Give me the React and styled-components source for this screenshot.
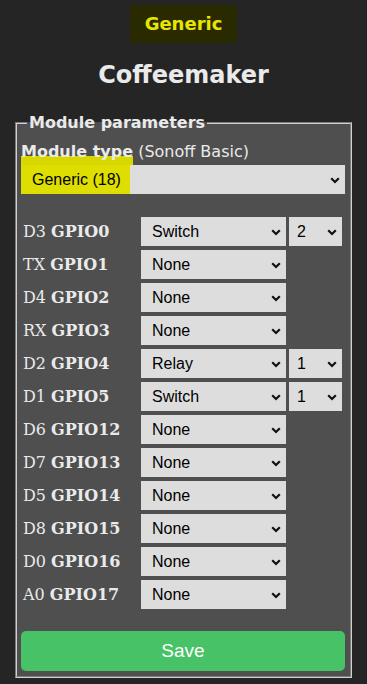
import React from 'react';
import styled, { createGlobalStyle } from 'styled-components';

const GlobalStyle = createGlobalStyle`
  html, body {
    margin: 0;
    padding: 0;
    background: #252525;
  }
  body {
    font-family: "DejaVu Sans", Verdana, sans-serif;
    color: #eaeaea;
  }
`;

const Page = styled.div`
  display: flex;
  flex-direction: column;
  align-items: center;
  padding: 5px 15px 0;
`;

const Badge = styled.div`
  background: #2a2a00;
  color: #e6e600;
  font-weight: bold;
  font-size: 18px;
  height: 38px;
  line-height: 38px;
  padding: 0 15px;
`;

const Title = styled.h2`
  margin: 17px 0 0;
  font-size: 24px;
  line-height: 30px;
  font-weight: bold;
  color: #eaeaea;
`;

const Fieldset = styled.fieldset`
  align-self: stretch;
  margin: 23px 0 0;
  padding: 10px 5px 5px 4px;
  background: #4f4f4f;
  border: 2px groove #d0d0d0;
  min-width: 0;
`;

const Legend = styled.legend`
  margin-left: 6px;
  padding: 0 2px;
  font-weight: bold;
  font-size: 16px;
  color: #eaeaea;
`;

const TypeLine = styled.div`
  font-size: 16px;
  line-height: 20px;
`;

const Marked = styled.b`
  display: inline-block;
  padding-bottom: 3px;
  margin-bottom: -3px;
  background: linear-gradient(to bottom, transparent 0 14px, #d8d800 14px);
`;

const SelectBox = styled.div`
  position: relative;
  width: ${p => p.$w || '100%'};
  height: 29px;
  margin-top: ${p => p.$mt || 0}px;
  background: ${p =>
    p.$mark
      ? 'linear-gradient(to right, #dede00 0 109px, #dddddd 109px)'
      : '#dddddd'};
`;

const NativeSelect = styled.select`
  appearance: none;
  -webkit-appearance: none;
  display: block;
  width: 100%;
  height: 100%;
  margin: 0;
  border: 0;
  outline: none;
  background: transparent;
  color: #000;
  font-family: "Liberation Sans", Arial, sans-serif;
  font-size: 16px;
  padding: 0 20px 0 ${p => p.$pl || 11}px;
`;

const Chevron = styled.svg`
  position: absolute;
  right: 5px;
  top: 50%;
  margin-top: -3px;
  pointer-events: none;
`;

const Pins = styled.div`
  display: flex;
  flex-direction: column;
  gap: 4px;
  margin-top: 23px;
`;

const Row = styled.div`
  display: grid;
  grid-template-columns: 117px 145px 53px;
  column-gap: 3px;
  align-items: center;
`;

const PinLabel = styled.div`
  padding-left: 2px;
  font-family: "DejaVu Serif", Georgia, serif;
  font-size: 16px;
  color: #eaeaea;
  white-space: nowrap;
`;

const SaveButton = styled.button`
  display: block;
  width: 100%;
  height: 40px;
  margin-top: 22px;
  border: 0;
  border-radius: 5px;
  background: #47c266;
  color: #fff;
  font-family: "Liberation Sans", Arial, sans-serif;
  font-size: 19px;
  cursor: pointer;
`;

const Select = ({ value, options, w, pl, mark, mt }) => (
  <SelectBox $w={w} $mark={mark} $mt={mt}>
    <NativeSelect $pl={pl} defaultValue={value}>
      {options.map(o => (
        <option key={o}>{o}</option>
      ))}
    </NativeSelect>
    <Chevron width="10" height="7" viewBox="0 0 10 7">
      <path d="M1.2 1.2 L5 5 L8.8 1.2" fill="none" stroke="#111" strokeWidth="2.2" />
    </Chevron>
  </SelectBox>
);

const kinds = ['None', 'Switch', 'Relay', 'Button', 'Led'];
const nums = ['1', '2', '3', '4'];

const pins = [
  { pad: 'D3', gpio: 'GPIO0', kind: 'Switch', idx: '2' },
  { pad: 'TX', gpio: 'GPIO1', kind: 'None' },
  { pad: 'D4', gpio: 'GPIO2', kind: 'None' },
  { pad: 'RX', gpio: 'GPIO3', kind: 'None' },
  { pad: 'D2', gpio: 'GPIO4', kind: 'Relay', idx: '1' },
  { pad: 'D1', gpio: 'GPIO5', kind: 'Switch', idx: '1' },
  { pad: 'D6', gpio: 'GPIO12', kind: 'None' },
  { pad: 'D7', gpio: 'GPIO13', kind: 'None' },
  { pad: 'D5', gpio: 'GPIO14', kind: 'None' },
  { pad: 'D8', gpio: 'GPIO15', kind: 'None' },
  { pad: 'D0', gpio: 'GPIO16', kind: 'None' },
  { pad: 'A0', gpio: 'GPIO17', kind: 'None' },
];

export default function App() {
  return (
    <>
      <GlobalStyle />
      <Page>
        <Badge>Generic</Badge>
        <Title>Coffeemaker</Title>
        <Fieldset>
          <Legend>Module parameters</Legend>
          <TypeLine>
            <Marked>Module type</Marked> (Sonoff Basic)
          </TypeLine>
          <Select value="Generic (18)" options={['Generic (18)', 'Sonoff Basic (1)']} mark mt={3} />
          <Pins>
            {pins.map(p => (
              <Row key={p.gpio}>
                <PinLabel>
                  {p.pad} <b>{p.gpio}</b>
                </PinLabel>
                <Select value={p.kind} options={kinds} />
                {p.idx && <Select value={p.idx} options={nums} pl={8} />}
              </Row>
            ))}
          </Pins>
          <SaveButton>Save</SaveButton>
        </Fieldset>
      </Page>
    </>
  );
}
